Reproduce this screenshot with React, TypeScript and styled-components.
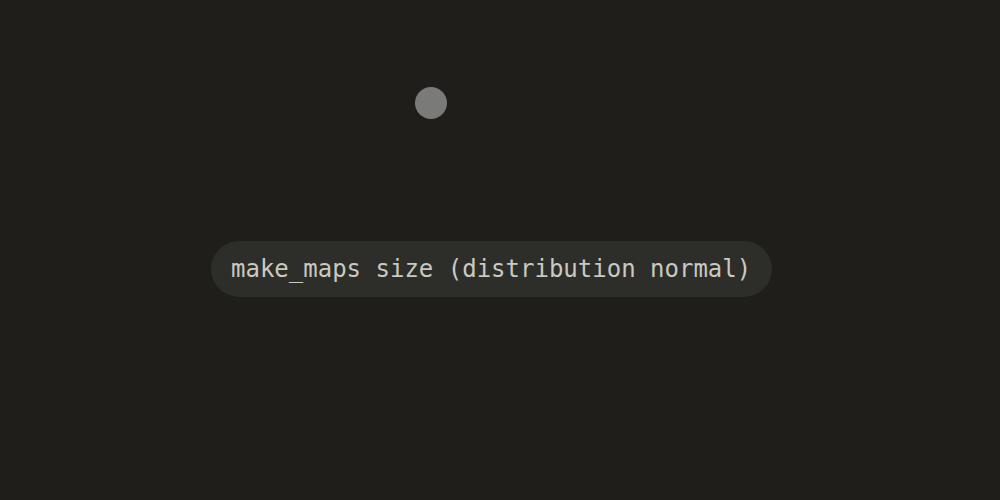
import React from "react";
import styled, { createGlobalStyle } from "styled-components";

const Global = createGlobalStyle`
  html, body { margin: 0; padding: 0; background: #1f1e1b; }
  #root { width: 1000px; height: 500px; }
`;

const Stage = styled.div`
  box-sizing: border-box;
  width: 1000px;
  height: 500px;
  background: #1f1e1b;
  display: flex;
  flex-direction: column;
  align-items: flex-start;
  padding: 87px 0 0 211px;
`;

const Dot = styled.div`
  width: 32px;
  height: 32px;
  border-radius: 50%;
  background: #7a7a79;
  margin-left: 204px;
`;

const Pill = styled.div`
  margin-top: 122px;
  height: 56px;
  box-sizing: border-box;
  display: flex;
  align-items: center;
  padding: 0 21px 0 20px;
  border-radius: 28px;
  background: #2d2e29;
  color: #c9c9c1;
  font-family: "DejaVu Sans Mono", monospace;
  font-size: 24px;
  white-space: pre;
`;

export default function App() {
  return (
    <>
      <Global />
      <Stage>
        <Dot />
        <Pill>make_maps size (distribution normal)</Pill>
      </Stage>
    </>
  );
}
